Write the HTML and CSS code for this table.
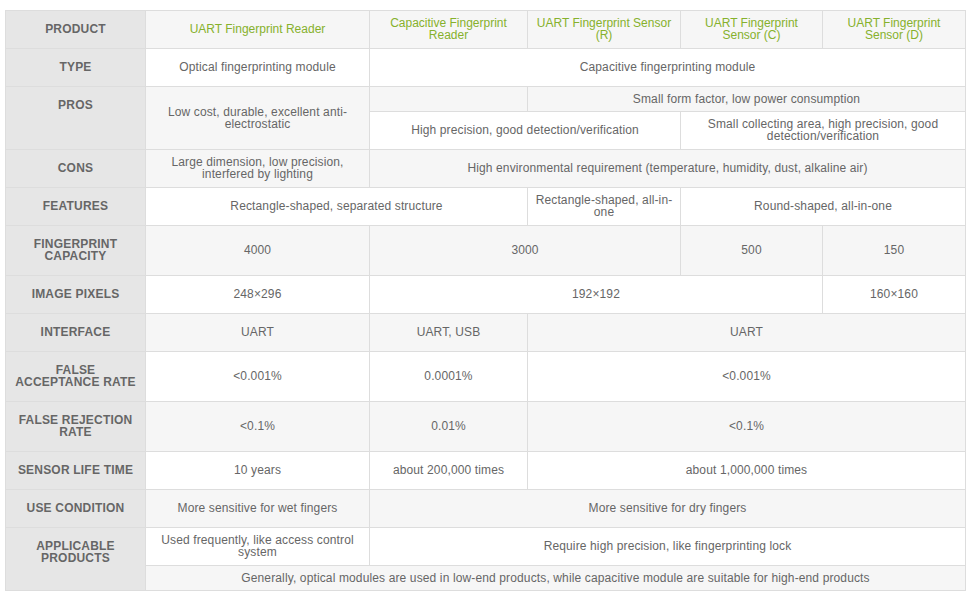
FILE: index.html
```html
<!DOCTYPE html>
<html lang="en">
<head>
<meta charset="utf-8">
<title>Fingerprint module comparison</title>
<link rel="stylesheet" href="styles.css">
</head>
<body>
<table class="spec">
  <colgroup>
    <col class="c0"><col class="c1"><col class="c2"><col class="c3"><col class="c4"><col class="c5">
  </colgroup>
  <tbody>
    <tr>
      <th>PRODUCT</th>
      <td class="prod">UART Fingerprint Reader</td>
      <td class="prod">Capacitive Fingerprint Reader</td>
      <td class="prod">UART Fingerprint Sensor (R)</td>
      <td class="prod">UART Fingerprint Sensor (C)</td>
      <td class="prod">UART Fingerprint Sensor (D)</td>
    </tr>
    <tr>
      <th>TYPE</th>
      <td>Optical fingerprinting module</td>
      <td colspan="4">Capacitive fingerprinting module</td>
    </tr>
    <tr class="short">
      <th rowspan="2">PROS</th>
      <td rowspan="2" class="span">Low cost, durable, excellent anti-electrostatic</td>
      <td></td>
      <td colspan="3">Small form factor, low power consumption</td>
    </tr>
    <tr>
      <td colspan="2">High precision, good detection/verification</td>
      <td colspan="2">Small collecting area, high precision, good detection/verification</td>
    </tr>
    <tr>
      <th>CONS</th>
      <td>Large dimension, low precision, interfered by lighting</td>
      <td colspan="4">High environmental requirement (temperature, humidity, dust, alkaline air)</td>
    </tr>
    <tr>
      <th>FEATURES</th>
      <td colspan="2">Rectangle-shaped, separated structure</td>
      <td>Rectangle-shaped, all-in-one</td>
      <td colspan="2">Round-shaped, all-in-one</td>
    </tr>
    <tr>
      <th>FINGERPRINT CAPACITY</th>
      <td>4000</td>
      <td colspan="2">3000</td>
      <td>500</td>
      <td>150</td>
    </tr>
    <tr>
      <th>IMAGE PIXELS</th>
      <td>248×296</td>
      <td colspan="3">192×192</td>
      <td>160×160</td>
    </tr>
    <tr>
      <th>INTERFACE</th>
      <td>UART</td>
      <td>UART, USB</td>
      <td colspan="3">UART</td>
    </tr>
    <tr>
      <th>FALSE ACCEPTANCE RATE</th>
      <td>&lt;0.001%</td>
      <td>0.0001%</td>
      <td colspan="3">&lt;0.001%</td>
    </tr>
    <tr>
      <th>FALSE REJECTION RATE</th>
      <td>&lt;0.1%</td>
      <td>0.01%</td>
      <td colspan="3">&lt;0.1%</td>
    </tr>
    <tr>
      <th>SENSOR LIFE TIME</th>
      <td>10 years</td>
      <td>about 200,000 times</td>
      <td colspan="3">about 1,000,000 times</td>
    </tr>
    <tr>
      <th>USE CONDITION</th>
      <td>More sensitive for wet fingers</td>
      <td colspan="4">More sensitive for dry fingers</td>
    </tr>
    <tr>
      <th rowspan="2">APPLICABLE PRODUCTS</th>
      <td>Used frequently, like access control system</td>
      <td colspan="4">Require high precision, like fingerprinting lock</td>
    </tr>
    <tr class="short">
      <td colspan="5">Generally, optical modules are used in low-end products, while capacitive module are suitable for high-end products</td>
    </tr>
  </tbody>
</table>
</body>
</html>
```

FILE: styles.css
```css
html, body {
  margin: 0;
  background: #ffffff;
}

body {
  padding: 10px 5px;
  font-family: "Liberation Sans", Arial, sans-serif;
  font-size: 12px;
  color: #666666;
}

.spec {
  width: 960px;
  border-collapse: collapse;
  table-layout: fixed;
  border: 1px solid #dddddd;
}

.c0 { width: 140px; }
.c1 { width: 224px; }
.c2 { width: 158px; }
.c3 { width: 153px; }
.c4 { width: 142px; }
.c5 { width: 143px; }

.spec tr:nth-child(odd) td {
  background: #f6f6f6;
}

.spec tr:nth-child(even) td {
  background: #ffffff;
}

.spec th,
.spec td {
  border: 1px solid #dddddd;
  line-height: 12px;
  text-align: center;
}

.spec th {
  background: #e6e6e6;
  color: #666666;
  font-weight: bold;
  vertical-align: top;
  padding: 12px 8px 13px;
  letter-spacing: 0.2px;
}

.spec td {
  vertical-align: middle;
  padding: 6px 5px 7px;
  letter-spacing: 0.13px;
}

.spec tr.short td {
  padding-bottom: 6px;
}

.spec td.span {
  padding-top: 5px;
  padding-bottom: 5px;
}

.spec td.prod {
  color: #86b12c;
  letter-spacing: 0;
}
```
